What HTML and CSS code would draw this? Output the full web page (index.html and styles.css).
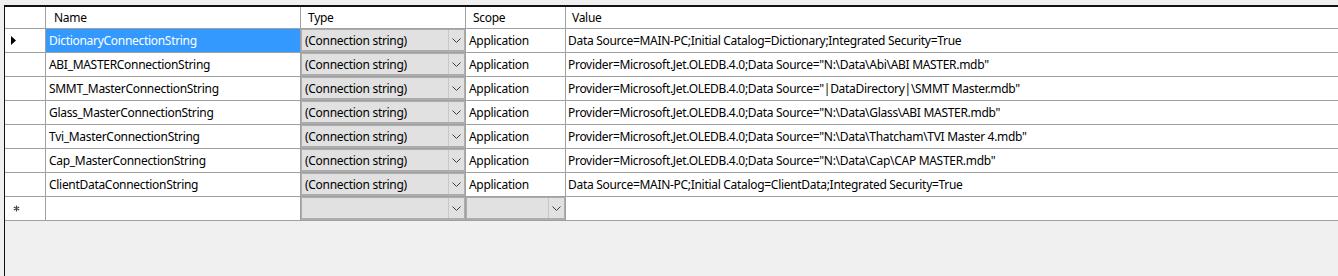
FILE: index.html
```html
<!DOCTYPE html>
<html>
<head>
<meta charset="utf-8">
<link rel="stylesheet" href="styles.css">
</head>
<body>
<div class="window">
  <div class="grid">
    <div class="row head">
      <div class="cell rh"></div>
      <div class="cell name">Name</div>
      <div class="cell type hd">Type</div>
      <div class="cell scope hd">Scope</div>
      <div class="cell value hd">Value</div>
    </div>

    <div class="row">
      <div class="cell rh"><svg class="arrow" width="5" height="9" viewBox="0 0 5 9"><path d="M0 0 L5 4.5 L0 9 Z" fill="#000"/></svg></div>
      <div class="cell name sel">DictionaryConnectionString</div>
      <div class="cell type"><div class="combo"><span class="ctext">(Connection string)</span><span class="btn"><svg width="9" height="5" viewBox="0 0 9 5"><path d="M0.5 0.5 L4.5 4.5 L8.5 0.5" fill="none" stroke="#3c3c3c" stroke-width="1"/></svg></span></div></div>
      <div class="cell scope">Application</div>
      <div class="cell value">Data Source=MAIN-PC;Initial Catalog=Dictionary;Integrated Security=True</div>
    </div>

    <div class="row">
      <div class="cell rh"></div>
      <div class="cell name">ABI_MASTERConnectionString</div>
      <div class="cell type"><div class="combo"><span class="ctext">(Connection string)</span><span class="btn"><svg width="9" height="5" viewBox="0 0 9 5"><path d="M0.5 0.5 L4.5 4.5 L8.5 0.5" fill="none" stroke="#3c3c3c" stroke-width="1"/></svg></span></div></div>
      <div class="cell scope">Application</div>
      <div class="cell value">Provider=Microsoft.Jet.OLEDB.4.0;Data Source="N:\Data\Abi\ABI MASTER.mdb"</div>
    </div>

    <div class="row">
      <div class="cell rh"></div>
      <div class="cell name">SMMT_MasterConnectionString</div>
      <div class="cell type"><div class="combo"><span class="ctext">(Connection string)</span><span class="btn"><svg width="9" height="5" viewBox="0 0 9 5"><path d="M0.5 0.5 L4.5 4.5 L8.5 0.5" fill="none" stroke="#3c3c3c" stroke-width="1"/></svg></span></div></div>
      <div class="cell scope">Application</div>
      <div class="cell value">Provider=Microsoft.Jet.OLEDB.4.0;Data Source="|DataDirectory|\SMMT Master.mdb"</div>
    </div>

    <div class="row">
      <div class="cell rh"></div>
      <div class="cell name">Glass_MasterConnectionString</div>
      <div class="cell type"><div class="combo"><span class="ctext">(Connection string)</span><span class="btn"><svg width="9" height="5" viewBox="0 0 9 5"><path d="M0.5 0.5 L4.5 4.5 L8.5 0.5" fill="none" stroke="#3c3c3c" stroke-width="1"/></svg></span></div></div>
      <div class="cell scope">Application</div>
      <div class="cell value">Provider=Microsoft.Jet.OLEDB.4.0;Data Source="N:\Data\Glass\ABI MASTER.mdb"</div>
    </div>

    <div class="row">
      <div class="cell rh"></div>
      <div class="cell name">Tvi_MasterConnectionString</div>
      <div class="cell type"><div class="combo"><span class="ctext">(Connection string)</span><span class="btn"><svg width="9" height="5" viewBox="0 0 9 5"><path d="M0.5 0.5 L4.5 4.5 L8.5 0.5" fill="none" stroke="#3c3c3c" stroke-width="1"/></svg></span></div></div>
      <div class="cell scope">Application</div>
      <div class="cell value">Provider=Microsoft.Jet.OLEDB.4.0;Data Source="N:\Data\Thatcham\TVI Master 4.mdb"</div>
    </div>

    <div class="row">
      <div class="cell rh"></div>
      <div class="cell name">Cap_MasterConnectionString</div>
      <div class="cell type"><div class="combo"><span class="ctext">(Connection string)</span><span class="btn"><svg width="9" height="5" viewBox="0 0 9 5"><path d="M0.5 0.5 L4.5 4.5 L8.5 0.5" fill="none" stroke="#3c3c3c" stroke-width="1"/></svg></span></div></div>
      <div class="cell scope">Application</div>
      <div class="cell value">Provider=Microsoft.Jet.OLEDB.4.0;Data Source="N:\Data\Cap\CAP MASTER.mdb"</div>
    </div>

    <div class="row">
      <div class="cell rh"></div>
      <div class="cell name">ClientDataConnectionString</div>
      <div class="cell type"><div class="combo"><span class="ctext">(Connection string)</span><span class="btn"><svg width="9" height="5" viewBox="0 0 9 5"><path d="M0.5 0.5 L4.5 4.5 L8.5 0.5" fill="none" stroke="#3c3c3c" stroke-width="1"/></svg></span></div></div>
      <div class="cell scope">Application</div>
      <div class="cell value">Data Source=MAIN-PC;Initial Catalog=ClientData;Integrated Security=True</div>
    </div>

    <div class="row">
      <div class="cell rh"><svg class="star" width="7" height="7" viewBox="0 0 7 7"><path d="M3.5 0.5 V6.5 M0.8 2 L6.2 5 M0.8 5 L6.2 2" stroke="#444" stroke-width="1.2"/></svg></div>
      <div class="cell name"></div>
      <div class="cell type"><div class="combo"><span class="ctext"></span><span class="btn"><svg width="9" height="5" viewBox="0 0 9 5"><path d="M0.5 0.5 L4.5 4.5 L8.5 0.5" fill="none" stroke="#3c3c3c" stroke-width="1"/></svg></span></div></div>
      <div class="cell scope"><div class="combo"><span class="ctext"></span><span class="btn"><svg width="9" height="5" viewBox="0 0 9 5"><path d="M0.5 0.5 L4.5 4.5 L8.5 0.5" fill="none" stroke="#3c3c3c" stroke-width="1"/></svg></span></div></div>
      <div class="cell value"></div>
    </div>
  </div>
</div>
</body>
</html>
```

FILE: styles.css
```css
html, body {
  margin: 0;
  padding: 0;
  background: #f0f0f0;
  overflow: hidden;
}
.window {
  width: 1338px;
  height: 276px;
  padding: 5px 0 0 4px;
  box-sizing: border-box;
  overflow: hidden;
}
.grid {
  height: 271px;
  box-sizing: border-box;
  border-top: 2px solid #111;
  border-left: 1px solid #111;
  background: #f0f0f0;
  font-family: "Noto Sans", "Segoe UI", sans-serif;
  font-size: 12px;
  letter-spacing: -0.3px;
  color: #000;
}
.row {
  display: flex;
  height: 24px;
}
.row.head {
  height: 22px;
}
.cell {
  box-sizing: border-box;
  height: 100%;
  background: #fff;
  border-right: 1px solid #a0a0a0;
  border-bottom: 1px solid #a0a0a0;
  display: flex;
  align-items: center;
  white-space: nowrap;
  overflow: hidden;
  padding-left: 3px;
}
.head .cell {
  padding-left: 8px;
}
.rh {
  width: 41px;
  flex: none;
  padding-left: 0;
}
.head .rh { padding-left: 0; }
.name { width: 255px; flex: none; }
.type { width: 165px; flex: none; padding-left: 0; }
.head .type { padding-left: 7px; }
.scope { width: 100px; flex: none; }
.head .scope { padding-left: 7px; }
.value { flex: 1; min-width: 0; padding-left: 2px; border-right: none; }
.head .value { padding-left: 6px; }
.sel {
  background: #3399ff;
  color: #fff;
}
.arrow {
  margin-left: 6px;
}
.star {
  margin-left: 8px;
}
.combo {
  box-sizing: border-box;
  width: 100%;
  height: 100%;
  background: #e1e1e1;
  border: 1px solid #adadad;
  border-bottom-width: 2px;
  display: flex;
  align-items: center;
}
.scope .combo {
  margin-left: -3px;
  width: calc(100% + 3px);
}
.ctext {
  flex: 1;
  padding-left: 3px;
  overflow: hidden;
}
.btn {
  width: 15px;
  height: 100%;
  border-left: 1px solid #c8c8c8;
  display: flex;
  align-items: center;
  justify-content: center;
}
```
